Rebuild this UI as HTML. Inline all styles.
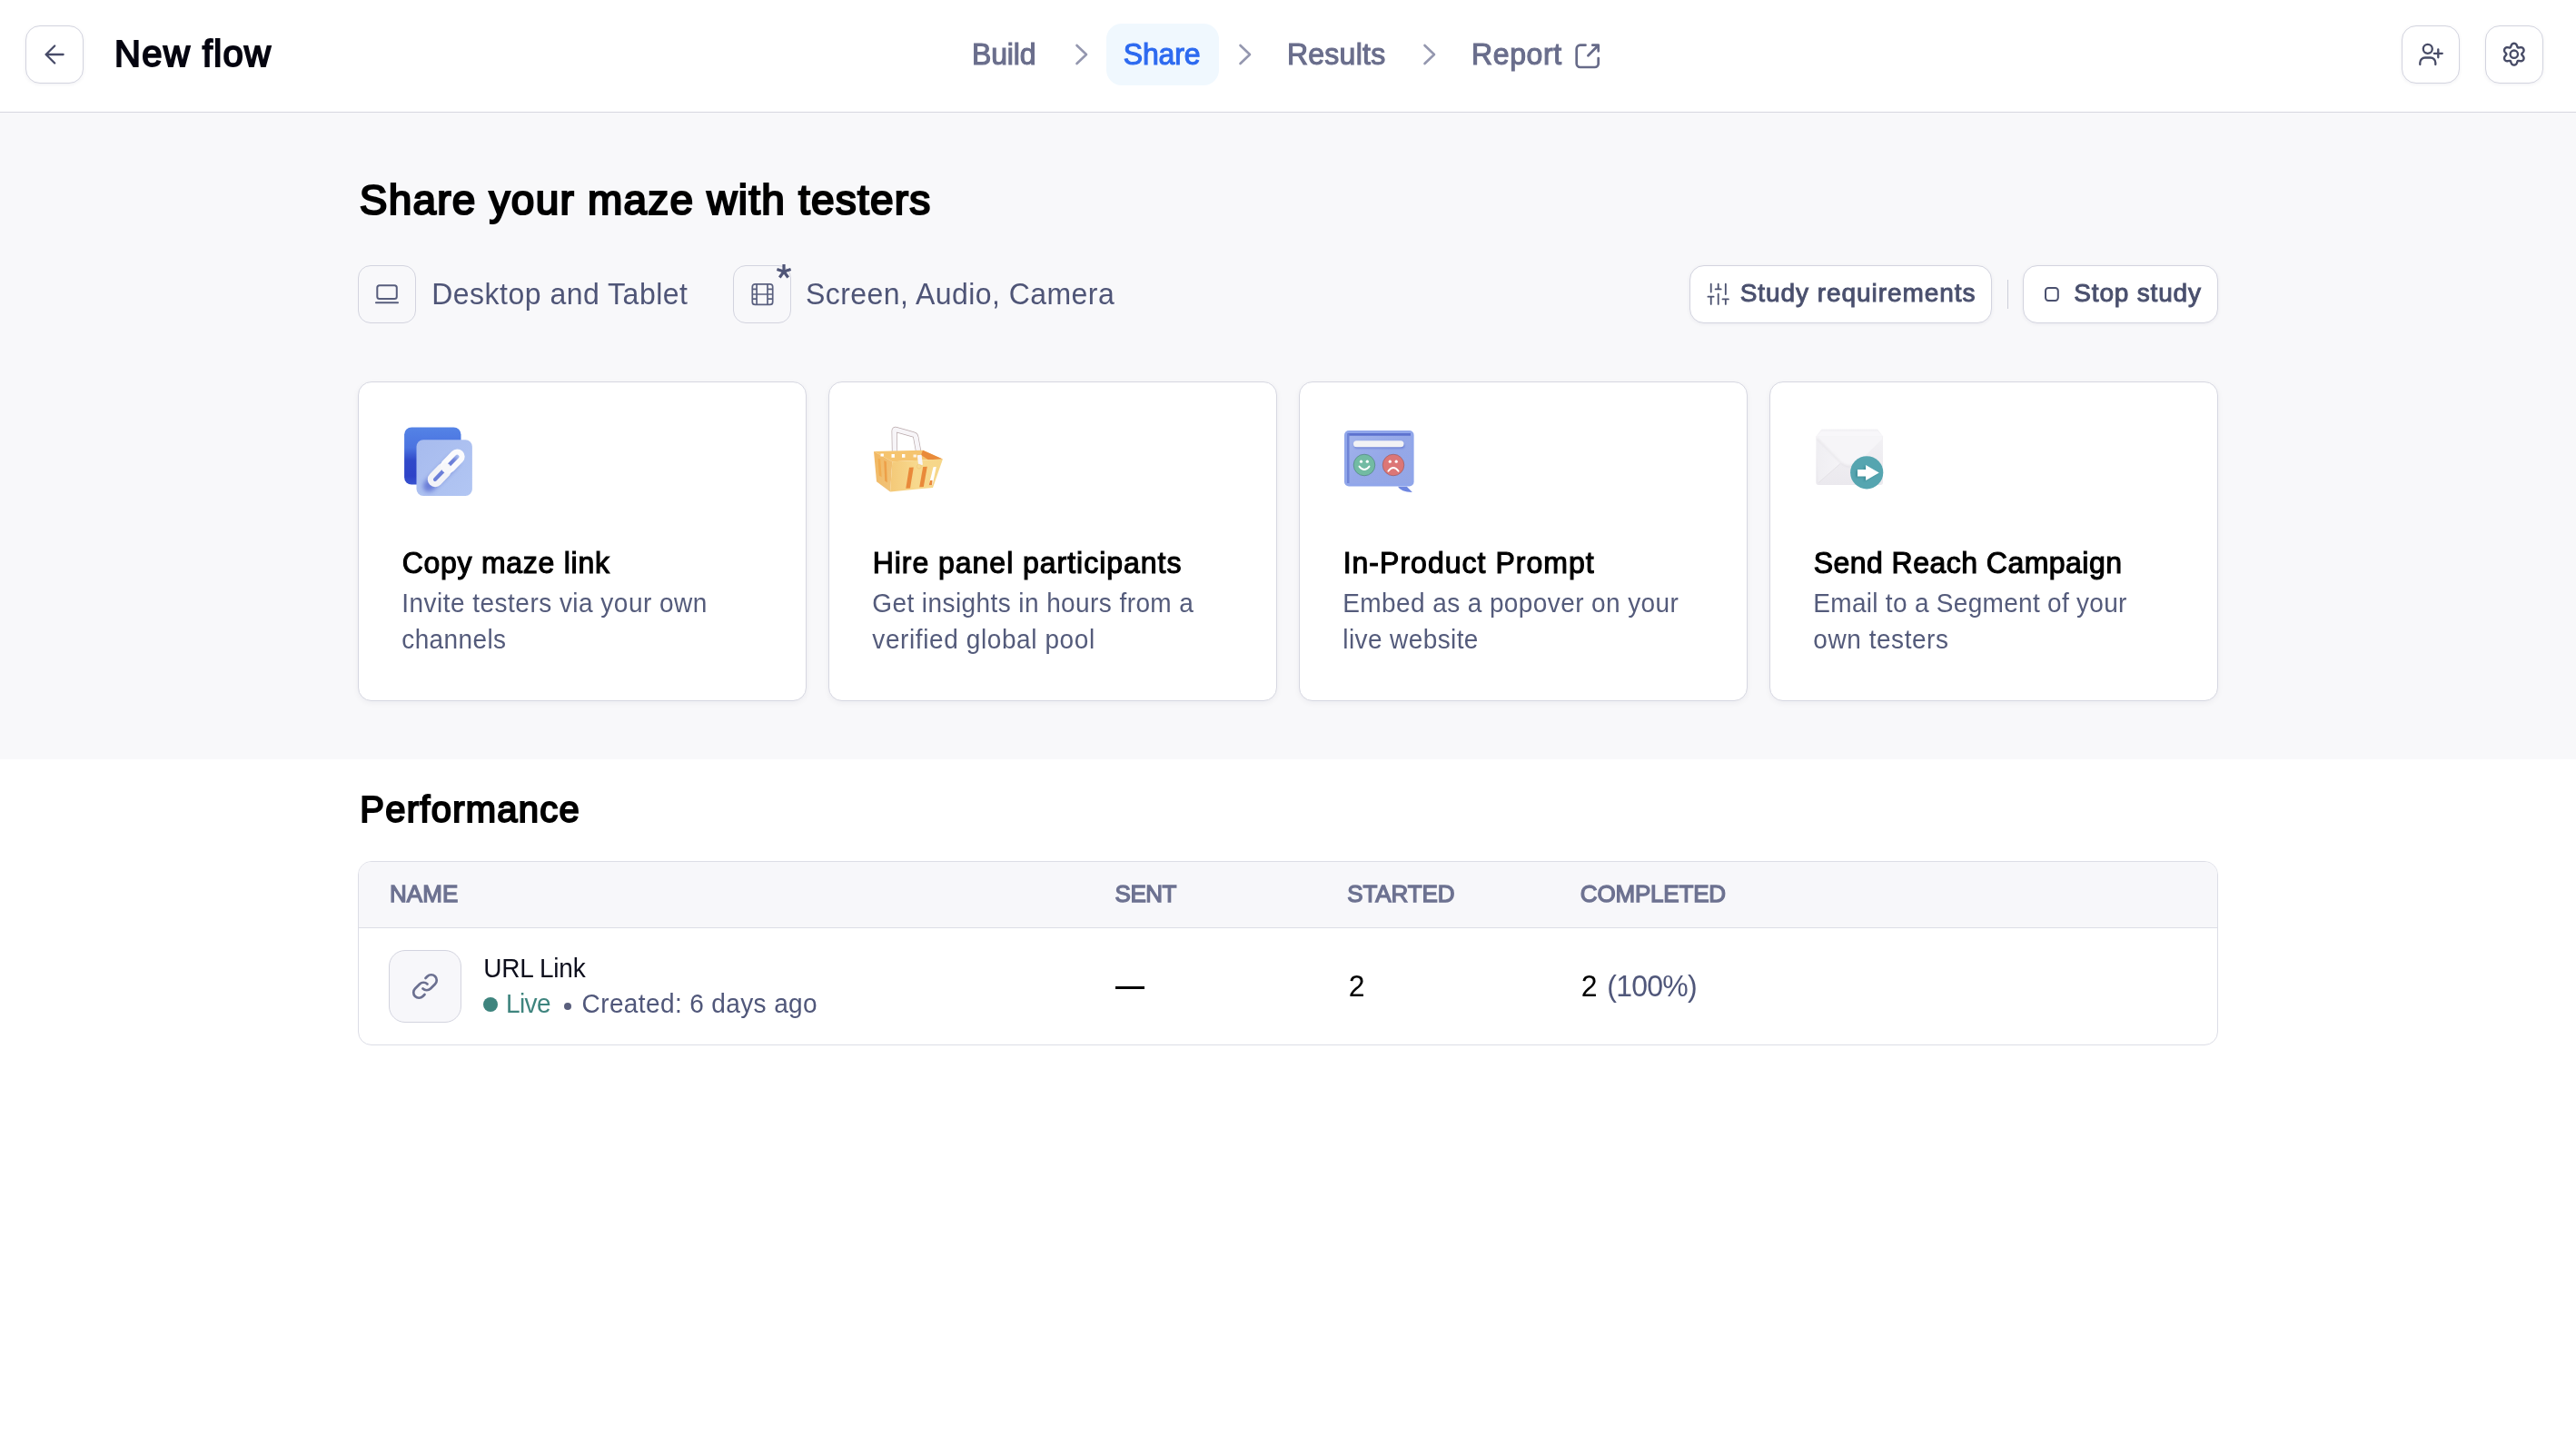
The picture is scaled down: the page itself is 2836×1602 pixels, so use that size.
<!DOCTYPE html>
<html><head><meta charset="utf-8"><title>Share</title>
<style>
html,body{margin:0;padding:0}
body{width:2836px;height:1602px;position:relative;overflow:hidden;background:#fff;font-family:"Liberation Sans",sans-serif}
#gray{position:absolute;left:0;top:124px;width:2836px;height:712px;background:#F8F8FA}
#hdr{position:absolute;left:0;top:0;width:2836px;height:123px;background:#fff;border-bottom:1px solid #D6D7DF}
.t{position:absolute;white-space:nowrap;line-height:1}
.ic{position:absolute;overflow:visible}
.btn{position:absolute;box-sizing:border-box;border:1px solid #D3D4DF;border-radius:16px;background:#fff;box-shadow:0 1px 4px rgba(20,20,60,0.06)}
.box{position:absolute;box-sizing:border-box;border:1px solid #D3D4DF;border-radius:14px}
.card{position:absolute;box-sizing:border-box;border:1px solid #D6D7E1;border-radius:15px;background:#fff;box-shadow:0 2px 6px rgba(20,20,60,0.05)}
#tbl{position:absolute;left:394px;top:948px;width:2048px;height:203px;box-sizing:border-box;border:1px solid #DCDDE6;border-radius:15px;background:#fff;overflow:hidden}
#thead{position:absolute;left:0;top:0;right:0;height:72px;background:#F7F7FA;border-bottom:1px solid #DCDDE6}
</style></head><body>
<div id="gray"></div>
<div id="hdr"></div><div class="btn" style="left:28px;top:28px;width:64px;height:64px;"></div><svg class="ic" style="left:44px;top:44px" width="32" height="32" viewBox="0 0 32 32"><path d="M25.6 16H6.6M16.2 6.5l-9.6 9.5 9.6 9.5" fill="none" stroke="#474B68" stroke-width="2.3" stroke-linecap="round" stroke-linejoin="round"/></svg><div class="t" style="left:125.96px;top:38.57px;font-size:40px;color:#050510;-webkit-text-stroke:1.92px #050510;letter-spacing:1.397px;transform:scaleY(1.015);transform-origin:0 33.87px;">New flow</div>
<div style="position:absolute;left:1218px;top:26px;width:124px;height:68px;border-radius:17px;background:#F0F8FE"></div><div class="t" style="left:1069.94px;top:43.96px;font-size:32px;color:#6A6E8C;-webkit-text-stroke:1.09px #6A6E8C;letter-spacing:-0.147px;transform:scaleY(1.015);transform-origin:0 27.09px;">Build</div>
<div class="t" style="left:1236.84px;top:43.96px;font-size:32px;color:#2D6AF0;-webkit-text-stroke:1.09px #2D6AF0;letter-spacing:-0.172px;transform:scaleY(1.015);transform-origin:0 27.09px;">Share</div>
<div class="t" style="left:1416.94px;top:43.96px;font-size:32px;color:#6A6E8C;-webkit-text-stroke:1.09px #6A6E8C;letter-spacing:0.252px;transform:scaleY(1.015);transform-origin:0 27.09px;">Results</div>
<div class="t" style="left:1619.94px;top:43.96px;font-size:32px;color:#6A6E8C;-webkit-text-stroke:1.09px #6A6E8C;letter-spacing:0.642px;transform:scaleY(1.015);transform-origin:0 27.09px;">Report</div>
<svg class="ic" style="left:1180px;top:45px" width="22" height="30" viewBox="0 0 22 30"><path d="M5.5 5l10.5 10-10.5 10" fill="none" stroke="#9497AF" stroke-width="2.6" stroke-linecap="round" stroke-linejoin="round"/></svg><svg class="ic" style="left:1360px;top:45px" width="22" height="30" viewBox="0 0 22 30"><path d="M5.5 5l10.5 10-10.5 10" fill="none" stroke="#9497AF" stroke-width="2.6" stroke-linecap="round" stroke-linejoin="round"/></svg><svg class="ic" style="left:1563px;top:45px" width="22" height="30" viewBox="0 0 22 30"><path d="M5.5 5l10.5 10-10.5 10" fill="none" stroke="#9497AF" stroke-width="2.6" stroke-linecap="round" stroke-linejoin="round"/></svg><svg class="ic" style="left:1730px;top:44px" width="36" height="36" viewBox="0 0 36 36"><path d="M15.5 5.7H9.7A4 4 0 0 0 5.7 9.7V26A4 4 0 0 0 9.7 30H25.7A4 4 0 0 0 29.7 26V20.1M23.3 5.7H29.7V12.3M29.7 5.7L18.4 17.2" fill="none" stroke="#676B89" stroke-width="2.7" stroke-linecap="round" stroke-linejoin="round"/></svg><div class="btn" style="left:2644px;top:28px;width:64px;height:64px;"></div><div class="btn" style="left:2736px;top:28px;width:64px;height:64px;"></div><svg class="ic" style="left:2656px;top:40px" width="40" height="40" viewBox="0 0 40 40"><circle cx="16.8" cy="13.8" r="5" fill="none" stroke="#474B66" stroke-width="2.3"/><path d="M8.3 31v-2a5.5 5.5 0 0 1 5.5-5.5h6a5.5 5.5 0 0 1 5.5 5.5v2M28.3 14.3v9M23.8 18.8h9" fill="none" stroke="#474B66" stroke-width="2.3" stroke-linecap="round"/></svg><svg class="ic" style="left:2748px;top:40px" width="40" height="40" viewBox="0 0 40 40"><path id="gear" fill="none" stroke="#474B66" stroke-width="2.4" stroke-linejoin="round" d="M19.80 7.80L20.01 7.81L20.21 7.82L20.42 7.85L20.63 7.90L20.83 7.95L21.03 8.03L21.22 8.11L21.41 8.22L21.60 8.34L21.78 8.47L21.95 8.63L22.12 8.80L22.27 8.99L22.42 9.19L22.56 9.41L22.68 9.64L22.80 9.88L22.91 10.13L23.01 10.38L23.10 10.63L23.19 10.88L23.27 11.12L23.35 11.35L23.42 11.56L23.50 11.76L23.58 11.94L23.67 12.10L23.77 12.23L23.88 12.34L24.00 12.43L24.13 12.49L24.28 12.53L24.45 12.54L24.63 12.54L24.82 12.52L25.04 12.49L25.26 12.45L25.50 12.41L25.75 12.36L26.00 12.31L26.27 12.26L26.53 12.22L26.80 12.19L27.07 12.17L27.33 12.17L27.59 12.18L27.84 12.20L28.08 12.24L28.31 12.30L28.53 12.37L28.74 12.46L28.94 12.56L29.12 12.67L29.30 12.80L29.46 12.94L29.61 13.08L29.75 13.24L29.88 13.40L30.00 13.57L30.11 13.75L30.20 13.93L30.29 14.12L30.37 14.31L30.43 14.51L30.49 14.72L30.52 14.93L30.55 15.14L30.55 15.36L30.54 15.58L30.51 15.80L30.46 16.03L30.40 16.26L30.31 16.49L30.21 16.72L30.09 16.94L29.95 17.17L29.80 17.39L29.64 17.61L29.47 17.82L29.30 18.02L29.13 18.22L28.97 18.41L28.81 18.59L28.66 18.77L28.53 18.94L28.41 19.10L28.32 19.25L28.25 19.40L28.21 19.55L28.20 19.70L28.21 19.85L28.25 20.00L28.32 20.15L28.41 20.30L28.53 20.46L28.66 20.63L28.81 20.81L28.97 20.99L29.13 21.18L29.30 21.38L29.47 21.58L29.64 21.79L29.80 22.01L29.95 22.23L30.09 22.46L30.21 22.68L30.31 22.91L30.40 23.14L30.46 23.37L30.51 23.60L30.54 23.82L30.55 24.04L30.55 24.26L30.52 24.47L30.49 24.68L30.43 24.89L30.37 25.09L30.29 25.28L30.20 25.47L30.11 25.65L30.00 25.83L29.88 26.00L29.75 26.16L29.61 26.32L29.46 26.46L29.30 26.60L29.12 26.73L28.94 26.84L28.74 26.94L28.53 27.03L28.31 27.10L28.08 27.16L27.84 27.20L27.59 27.22L27.33 27.23L27.07 27.23L26.80 27.21L26.53 27.18L26.27 27.14L26.00 27.09L25.75 27.04L25.50 26.99L25.26 26.95L25.04 26.91L24.82 26.88L24.63 26.86L24.45 26.86L24.28 26.87L24.13 26.91L24.00 26.97L23.88 27.06L23.77 27.17L23.67 27.30L23.58 27.46L23.50 27.64L23.42 27.84L23.35 28.05L23.27 28.28L23.19 28.52L23.10 28.77L23.01 29.02L22.91 29.27L22.80 29.52L22.68 29.76L22.56 29.99L22.42 30.21L22.27 30.41L22.12 30.60L21.95 30.77L21.78 30.93L21.60 31.06L21.41 31.18L21.22 31.29L21.03 31.37L20.83 31.45L20.63 31.50L20.42 31.55L20.21 31.58L20.01 31.59L19.80 31.60L19.59 31.59L19.39 31.58L19.18 31.55L18.97 31.50L18.77 31.45L18.57 31.37L18.38 31.29L18.19 31.18L18.00 31.06L17.82 30.93L17.65 30.77L17.48 30.60L17.33 30.41L17.18 30.21L17.04 29.99L16.92 29.76L16.80 29.52L16.69 29.27L16.59 29.02L16.50 28.77L16.41 28.52L16.33 28.28L16.25 28.05L16.18 27.84L16.10 27.64L16.02 27.46L15.93 27.30L15.83 27.17L15.72 27.06L15.60 26.97L15.47 26.91L15.32 26.87L15.15 26.86L14.97 26.86L14.78 26.88L14.56 26.91L14.34 26.95L14.10 26.99L13.85 27.04L13.60 27.09L13.33 27.14L13.07 27.18L12.80 27.21L12.53 27.23L12.27 27.23L12.01 27.22L11.76 27.20L11.52 27.16L11.29 27.10L11.07 27.03L10.86 26.94L10.66 26.84L10.48 26.73L10.30 26.60L10.14 26.46L9.99 26.32L9.85 26.16L9.72 26.00L9.60 25.83L9.49 25.65L9.40 25.47L9.31 25.28L9.23 25.09L9.17 24.89L9.11 24.68L9.08 24.47L9.05 24.26L9.05 24.04L9.06 23.82L9.09 23.60L9.14 23.37L9.20 23.14L9.29 22.91L9.39 22.68L9.51 22.46L9.65 22.23L9.80 22.01L9.96 21.79L10.13 21.58L10.30 21.38L10.47 21.18L10.63 20.99L10.79 20.81L10.94 20.63L11.07 20.46L11.19 20.30L11.28 20.15L11.35 20.00L11.39 19.85L11.40 19.70L11.39 19.55L11.35 19.40L11.28 19.25L11.19 19.10L11.07 18.94L10.94 18.77L10.79 18.59L10.63 18.41L10.47 18.22L10.30 18.02L10.13 17.82L9.96 17.61L9.80 17.39L9.65 17.17L9.51 16.94L9.39 16.72L9.29 16.49L9.20 16.26L9.14 16.03L9.09 15.80L9.06 15.58L9.05 15.36L9.05 15.14L9.08 14.93L9.11 14.72L9.17 14.51L9.23 14.31L9.31 14.12L9.40 13.93L9.49 13.75L9.60 13.57L9.72 13.40L9.85 13.24L9.99 13.08L10.14 12.94L10.30 12.80L10.48 12.67L10.66 12.56L10.86 12.46L11.07 12.37L11.29 12.30L11.52 12.24L11.76 12.20L12.01 12.18L12.27 12.17L12.53 12.17L12.80 12.19L13.07 12.22L13.33 12.26L13.60 12.31L13.85 12.36L14.10 12.41L14.34 12.45L14.56 12.49L14.78 12.52L14.97 12.54L15.15 12.54L15.32 12.53L15.47 12.49L15.60 12.43L15.72 12.34L15.83 12.23L15.93 12.10L16.02 11.94L16.10 11.76L16.18 11.56L16.25 11.35L16.33 11.12L16.41 10.88L16.50 10.63L16.59 10.38L16.69 10.13L16.80 9.88L16.92 9.64L17.04 9.41L17.18 9.19L17.33 8.99L17.48 8.80L17.65 8.63L17.82 8.47L18.00 8.34L18.19 8.22L18.38 8.11L18.57 8.03L18.77 7.95L18.97 7.90L19.18 7.85L19.39 7.82L19.59 7.81Z"/><circle cx="19.8" cy="19.7" r="4.2" fill="none" stroke="#474B66" stroke-width="2.3"/></svg><div class="t" style="left:395.80px;top:196.85px;font-size:46px;color:#000;-webkit-text-stroke:2.21px #000;letter-spacing:1.215px;transform:scaleY(1.015);transform-origin:0 38.95px;">Share your maze with testers</div>
<div class="box" style="left:394px;top:292px;width:64px;height:64px;"></div><svg class="ic" style="left:410px;top:308px" width="32" height="32" viewBox="0 0 32 32"><rect x="5.3" y="6.3" width="21.5" height="14.6" rx="2.5" fill="none" stroke="#575D7C" stroke-width="2"/><path d="M4 25.2h24" stroke="#575D7C" stroke-width="2.1" stroke-linecap="round"/></svg><div class="t" style="left:475.20px;top:308.31px;font-size:32px;color:#4F5577;letter-spacing:0.494px;transform:scaleY(1.055);transform-origin:0 27.09px;">Desktop and Tablet</div>
<div class="box" style="left:807px;top:292px;width:64px;height:64px;"></div><svg class="ic" style="left:823px;top:308px" width="32" height="32" viewBox="0 0 32 32"><g fill="none" stroke="#5A607F" stroke-width="1.7"><rect x="5.3" y="4.8" width="22.4" height="22.6" rx="3"/><path d="M10.1 4.8v22.6M22 4.8v22.6M5.3 16h22.4M5.3 10.3h4.8M5.3 21.2h4.8M22 10.3h5.3M22 21.2h5.3"/></g></svg><svg class="ic" style="left:853px;top:289px" width="20" height="20" viewBox="0 0 20 20"><g stroke="#4F5577" stroke-width="3.2" stroke-linecap="butt"><path d="M10 10V2"/><path d="M10 10L2.4 7.5"/><path d="M10 10L17.6 7.5"/><path d="M10 10L5.3 16.5"/><path d="M10 10L14.7 16.5"/></g></svg><div class="t" style="left:886.90px;top:308.31px;font-size:32px;color:#4F5577;letter-spacing:0.450px;transform:scaleY(1.055);transform-origin:0 27.09px;">Screen, Audio, Camera</div>
<div class="btn" style="left:1860px;top:292px;width:333px;height:64px;"></div><svg class="ic" style="left:1876px;top:308px" width="32" height="32" viewBox="0 0 32 32"><path d="M7.7 4.7v8.8M7.7 18.7v8.2M4.4 18.7h6.2M15.7 4.7v5.7M12.6 10.4h6.1M15.7 15.7v11.2M23.8 4.7v11.4M20.5 21.4h6.4M23.8 21.4v5.5" fill="none" stroke="#4A506E" stroke-width="1.8" stroke-linecap="round"/></svg><div class="t" style="left:1915.68px;top:309.42px;font-size:28px;color:#4A506E;-webkit-text-stroke:0.95px #4A506E;letter-spacing:0.938px;transform:scaleY(1.015);transform-origin:0 23.71px;">Study requirements</div>
<div style="position:absolute;left:2209.7px;top:308px;width:1.4px;height:32px;background:#CDCED9"></div><div class="btn" style="left:2227px;top:292px;width:215px;height:64px;"></div><svg class="ic" style="left:2243px;top:308px" width="32" height="32" viewBox="0 0 32 32"><rect x="9" y="9.1" width="13.8" height="13.8" rx="3.2" fill="none" stroke="#4A506E" stroke-width="2"/></svg><div class="t" style="left:2283.28px;top:309.42px;font-size:28px;color:#4A506E;-webkit-text-stroke:0.95px #4A506E;letter-spacing:0.828px;transform:scaleY(1.015);transform-origin:0 23.71px;">Stop study</div>
<div class="card" style="left:394px;top:420px;width:494px;height:352px;"></div><svg class="ic" style="left:444px;top:470px" width="80" height="80" viewBox="0 0 80 80">
<defs><linearGradient id="lg1" x1="0" y1="0" x2="0" y2="1"><stop offset="0" stop-color="#5483E6"/><stop offset="0.36" stop-color="#4B73E0"/><stop offset="0.58" stop-color="#3049C9"/><stop offset="0.85" stop-color="#2E43C8"/><stop offset="1" stop-color="#3853CF"/></linearGradient>
<linearGradient id="lg2" x1="0" y1="0" x2="1" y2="1"><stop offset="0" stop-color="#A7BBEE"/><stop offset="1" stop-color="#B2C6F3"/></linearGradient>
<filter id="lblur" x="-50%" y="-50%" width="200%" height="200%"><feGaussianBlur stdDeviation="2.6"/></filter>
<clipPath id="lclip"><rect x="14.5" y="14.2" width="61.4" height="61.7" rx="7.5"/></clipPath></defs>
<rect x="1.1" y="0.4" width="62.4" height="63.1" rx="8" fill="url(#lg1)"/>
<rect x="14.5" y="14.2" width="61.4" height="61.7" rx="7.5" fill="url(#lg2)"/>
<g clip-path="url(#lclip)"><g transform="translate(-5 6) rotate(-45 46.8 45.5)" filter="url(#lblur)" opacity="0.75"><rect x="21" y="39" width="50" height="13" rx="6.5" fill="#5467CF"/></g></g>
<g transform="rotate(-46 47 45.5)" fill="none" stroke-width="6.2">
<rect x="24.6" y="40.3" width="24.8" height="10.4" rx="5.2" stroke="#F3F3F7"/>
<rect x="45.2" y="40.3" width="24.8" height="10.4" rx="5.2" stroke="#FBFBFD"/>
<rect x="43" y="40" width="8" height="11" fill="#F7F7FA" stroke="none"/>
</g>
</svg><div class="t" style="left:442.64px;top:603.56px;font-size:32px;color:#000;-webkit-text-stroke:1.09px #000;letter-spacing:0.739px;transform:scaleY(1.015);transform-origin:0 27.09px;">Copy maze link</div>
<div class="t" style="left:442.30px;top:651.09px;font-size:28px;color:#545B7B;letter-spacing:0.473px;transform:scaleY(1.055);transform-origin:0 23.71px;">Invite testers via your own</div>
<div class="t" style="left:442.30px;top:691.19px;font-size:28px;color:#545B7B;letter-spacing:0.371px;transform:scaleY(1.055);transform-origin:0 23.71px;">channels</div>
<div class="card" style="left:912px;top:420px;width:494px;height:352px;"></div><svg class="ic" style="left:962px;top:470px" width="80" height="80" viewBox="0 0 80 80">
<defs><linearGradient id="bk1" x1="0" y1="0" x2="1" y2="0"><stop offset="0" stop-color="#F4C978"/><stop offset="0.5" stop-color="#F7D98E"/><stop offset="1" stop-color="#F6D688"/></linearGradient>
<linearGradient id="bk2" x1="0" y1="0" x2="1" y2="1"><stop offset="0" stop-color="#F2B761"/><stop offset="1" stop-color="#F0C47A"/></linearGradient></defs>
<path d="M23 27 L22.6 4.5 Q22.6 2.5 24.5 3 L44 8.5 Q46 9 46.3 11.5 L50.8 36" fill="none" stroke="#B8A8AA" stroke-width="6.2" stroke-linejoin="round"/>
<path d="M23 27 L22.6 4.5 Q22.6 2.5 24.5 3 L44 8.5 Q46 9 46.3 11.5 L50.8 36" fill="none" stroke="#F7F5F8" stroke-width="4.8" stroke-linejoin="round"/>
<path d="M0 26.9 L54 25.7 L75.9 35.6 L20.3 38.2 Z" fill="#F5C46F"/>
<path d="M54 25.7 L75.9 35.6 L60 36.3 L52 31 Z" fill="#E98A3A"/>
<path d="M0 26.9 L20.3 38.2 L18.1 71.5 L3 60.2 Z" fill="url(#bk2)"/>
<path d="M20.3 38.2 L75.9 35.6 L65 67 L18.1 71.5 Z" fill="url(#bk1)"/>
<g fill="#fff"><path d="M7.5 29.5h3.4v3h-3.4z"/><path d="M19.5 30h3.4v3.8h-3.4z"/><path d="M31 30h3.4v3.8h-3.4z"/><path d="M43.5 30.5h3.4v3h-3.4z" fill="#FFF3E0"/></g>
<g fill="#E9893A"><path d="M39 44.8 L43.8 44.5 L40 67.5 L35.3 67.8 Z"/><path d="M54.2 44 L58.8 43.8 L54.8 66 L50.2 66.3 Z"/><path d="M4.6 34.8 L7.2 35.5 L8.6 55.2 L5.8 53.6 Z" fill="#F0AC50"/><path d="M11.2 37 L13.8 38.2 L14.8 61.2 L12.2 59.4 Z" fill="#EDA048"/></g>
<path d="M65.5 44.2 L68.8 44 L64.6 64 L60.6 64.3 Z" fill="#FFFFFF"/><path d="M62 59 L64.5 58.8 L64.2 64 L60.6 64.3 Z" fill="#E9893A"/>
<path d="M50.2 31 L51.5 42" stroke="#F7F5F8" stroke-width="4.8"/>
<circle cx="49.8" cy="43.6" r="2.4" fill="#F7D98E" stroke="#EBC070" stroke-width="0.5"/>
</svg><div class="t" style="left:960.64px;top:603.56px;font-size:32px;color:#000;-webkit-text-stroke:1.09px #000;letter-spacing:0.973px;transform:scaleY(1.015);transform-origin:0 27.09px;">Hire panel participants</div>
<div class="t" style="left:960.30px;top:651.09px;font-size:28px;color:#545B7B;letter-spacing:0.415px;transform:scaleY(1.055);transform-origin:0 23.71px;">Get insights in hours from a</div>
<div class="t" style="left:960.30px;top:691.19px;font-size:28px;color:#545B7B;letter-spacing:0.600px;transform:scaleY(1.055);transform-origin:0 23.71px;">verified global pool</div>
<div class="card" style="left:1430px;top:420px;width:494px;height:352px;"></div><svg class="ic" style="left:1480px;top:470px" width="80" height="80" viewBox="0 0 80 80">
<defs><linearGradient id="pg1" x1="0" y1="0" x2="1" y2="1"><stop offset="0" stop-color="#A3B4EC"/><stop offset="0.5" stop-color="#95A8E8"/><stop offset="1" stop-color="#93A6E6"/></linearGradient>
<filter id="pblur" x="-20%" y="-50%" width="140%" height="200%"><feGaussianBlur stdDeviation="1.2"/></filter></defs>
<path d="M59 65.8 Q62 71.9 74.9 71.9 L68.8 65.8 Z" fill="#6E86E0"/>
<rect x="0" y="4" width="76.6" height="61.5" rx="5" fill="#90A6EA"/>
<rect x="3" y="7" width="70.6" height="55.5" rx="2" fill="url(#pg1)"/>
<path d="M3.5 7h69.5v2.8H3.5z" fill="#5D72CF"/>
<path d="M3 7.5v54.5h2.5V7.5z" fill="#6F84D6"/>
<rect x="11" y="18.5" width="55" height="5" rx="2" fill="#6175CE" filter="url(#pblur)" opacity="0.85"/>
<rect x="10" y="15.2" width="55.5" height="7" rx="3.5" fill="#F2F2F5"/>
<circle cx="22" cy="42" r="11.8" fill="#72BBA3" stroke="#3C6E64" stroke-width="0.5"/>
<circle cx="54" cy="42" r="11.8" fill="#DC7676" stroke="#8A4848" stroke-width="0.5"/>
<g fill="#fff"><circle cx="18.5" cy="38.2" r="1.6"/><circle cx="25.3" cy="38.2" r="1.6"/><circle cx="50.3" cy="38.2" r="1.6"/><circle cx="57.2" cy="38.2" r="1.6"/></g>
<path d="M16.5 43.6 Q22 50.5 27.5 43.6" fill="none" stroke="#fff" stroke-width="1.9" stroke-linecap="round"/>
<path d="M48.4 48.7 Q54 41.2 59.6 48.7" fill="none" stroke="#fff" stroke-width="1.9" stroke-linecap="round"/>
</svg><div class="t" style="left:1478.64px;top:603.56px;font-size:32px;color:#000;-webkit-text-stroke:1.09px #000;letter-spacing:1.026px;transform:scaleY(1.015);transform-origin:0 27.09px;">In-Product Prompt</div>
<div class="t" style="left:1478.30px;top:651.09px;font-size:28px;color:#545B7B;letter-spacing:0.400px;transform:scaleY(1.055);transform-origin:0 23.71px;">Embed as a popover on your</div>
<div class="t" style="left:1478.30px;top:691.19px;font-size:28px;color:#545B7B;letter-spacing:0.400px;transform:scaleY(1.055);transform-origin:0 23.71px;">live website</div>
<div class="card" style="left:1948px;top:420px;width:494px;height:352px;"></div><svg class="ic" style="left:1998px;top:470px" width="80" height="80" viewBox="0 0 80 80">
<defs><linearGradient id="mg1" x1="0" y1="0" x2="0" y2="1"><stop offset="0" stop-color="#F3F2F5"/><stop offset="1" stop-color="#EBE9EE"/></linearGradient>
<linearGradient id="mg2" x1="0" y1="0" x2="1" y2="0"><stop offset="0" stop-color="#EFEEF2"/><stop offset="1" stop-color="#F5F4F7"/></linearGradient>
<filter id="mblur" x="-50%" y="-50%" width="200%" height="200%"><feGaussianBlur stdDeviation="1.3"/></filter></defs>
<path d="M1.3 10.5 L7.5 2.5 H69 L75 10.5 V61 Q75 64 72 64 H4.3 Q1.3 64 1.3 61 Z" fill="url(#mg1)"/>
<path d="M1.3 10.5 L7.5 4.8 H69 L75 10.5 Z" fill="#F8F7FA"/>
<path d="M2 12.5 L28.9 39.7 L3.9 61.7 Z" fill="url(#mg2)"/>
<path d="M2 12.5 L28.9 39.7 Q38 47 47 40 L74.2 13.3 L74 10.5 H2 Z" fill="#F6F5F8"/>
<path d="M2.5 12.5 L28.9 39.7" stroke="#D6D2D8" stroke-width="0.9" filter="url(#mblur)"/>
<path d="M28.9 39.7 Q38 47 47 40" stroke="#DAD6DC" stroke-width="1" fill="none" filter="url(#mblur)"/>
<path d="M3.9 61.7 L28.1 40.5" stroke="#E1DEE3" stroke-width="0.8"/>
<circle cx="57.2" cy="50.3" r="18.1" fill="#56A5B0"/>
<path d="M46 47.2 H55 V42 L70.8 50.5 L55 59 V54.6 H46 Z" fill="#2F7F88" opacity="0.55" transform="translate(-1 1)" filter="url(#mblur)"/>
<path d="M47 46.9 H56.1 V42 L70.8 50.5 L56.1 59 V54.5 H47 Z" fill="#FFFFFF"/>
</svg><div class="t" style="left:1996.64px;top:603.56px;font-size:32px;color:#000;-webkit-text-stroke:1.09px #000;letter-spacing:0.473px;transform:scaleY(1.015);transform-origin:0 27.09px;">Send Reach Campaign</div>
<div class="t" style="left:1996.30px;top:651.09px;font-size:28px;color:#545B7B;letter-spacing:0.296px;transform:scaleY(1.055);transform-origin:0 23.71px;">Email to a Segment of your</div>
<div class="t" style="left:1996.30px;top:691.19px;font-size:28px;color:#545B7B;letter-spacing:0.550px;transform:scaleY(1.055);transform-origin:0 23.71px;">own testers</div>
<div class="t" style="left:396.36px;top:870.67px;font-size:40px;color:#000;-webkit-text-stroke:1.92px #000;letter-spacing:1.238px;transform:scaleY(1.015);transform-origin:0 33.87px;">Performance</div>
<div id="tbl"><div id="thead"></div></div><div class="t" style="left:428.95px;top:971.44px;font-size:26px;color:#6D7291;-webkit-text-stroke:1.30px #6D7291;letter-spacing:0.067px;transform:scaleY(1.015);transform-origin:0 22.01px;">NAME</div>
<div class="t" style="left:1227.55px;top:971.44px;font-size:26px;color:#6D7291;-webkit-text-stroke:1.30px #6D7291;letter-spacing:-0.500px;transform:scaleY(1.015);transform-origin:0 22.01px;">SENT</div>
<div class="t" style="left:1483.35px;top:971.44px;font-size:26px;color:#6D7291;-webkit-text-stroke:1.30px #6D7291;letter-spacing:-0.133px;transform:scaleY(1.015);transform-origin:0 22.01px;">STARTED</div>
<div class="t" style="left:1739.85px;top:971.44px;font-size:26px;color:#6D7291;-webkit-text-stroke:1.30px #6D7291;letter-spacing:-0.200px;transform:scaleY(1.015);transform-origin:0 22.01px;">COMPLETED</div>
<div class="box" style="left:428px;top:1046px;width:80px;height:80px;background:#F7F7FA;border-radius:18px"></div><svg class="ic" style="left:448px;top:1066px" width="40" height="40" viewBox="0 0 40 40"><path d="M17.5 22.5a6 6 0 0 0 8.5 0l5-5a6 6 0 0 0-8.5-8.5l-2 2M22.5 17.5a6 6 0 0 0-8.5 0l-5 5a6 6 0 0 0 8.5 8.5l2-2" fill="none" stroke="#6B7090" stroke-width="2.7" stroke-linecap="round" stroke-linejoin="round"/></svg><div class="t" style="left:532.20px;top:1052.59px;font-size:28px;color:#0D0E1C;letter-spacing:-0.229px;transform:scaleY(1.055);transform-origin:0 23.71px;">URL Link</div>
<div style="position:absolute;left:532.2px;top:1098px;width:16px;height:16px;border-radius:50%;background:#3E847E"></div><div class="t" style="left:556.90px;top:1091.79px;font-size:28px;color:#3E847E;letter-spacing:-0.567px;transform:scaleY(1.055);transform-origin:0 23.71px;">Live</div>
<div style="position:absolute;left:621px;top:1103.6px;width:8.2px;height:8.2px;border-radius:50%;background:#5A5F7D"></div><div class="t" style="left:640.60px;top:1091.79px;font-size:28px;color:#50577A;letter-spacing:0.383px;transform:scaleY(1.055);transform-origin:0 23.71px;">Created: 6 days ago</div>
<div style="position:absolute;left:1228px;top:1085.5px;width:32px;height:3px;background:#000"></div><div class="t" style="left:1484.80px;top:1070.01px;font-size:32px;color:#000;transform:scaleY(1.055);transform-origin:0 27.09px;">2</div>
<div class="t" style="left:1740.80px;top:1070.01px;font-size:32px;color:#000;transform:scaleY(1.055);transform-origin:0 27.09px;">2</div>
<div class="t" style="left:1769.30px;top:1070.01px;font-size:32px;color:#50577A;letter-spacing:-0.780px;transform:scaleY(1.055);transform-origin:0 27.09px;">(100%)</div>

</body></html>
